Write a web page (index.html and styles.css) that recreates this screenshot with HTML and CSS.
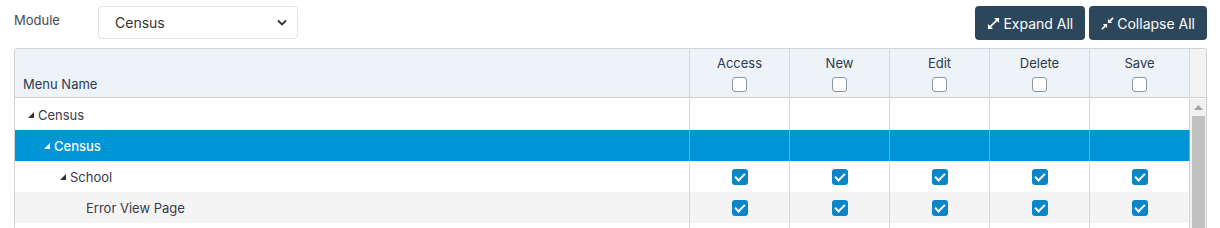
FILE: index.html
```html
<!DOCTYPE html>
<html lang="en">
<head>
    <meta charset="UTF-8">
    <meta name="viewport" content="width=device-width, initial-scale=1.0">
    <title>Menu Rights</title>
    <link rel="stylesheet" href="styles.css">
</head>
<body>
    <div class="page">
        <div class="toolbar">
            <label class="field-label">Module</label>
            <div class="select">
                <span>Census</span>
                <svg class="chevron" width="10" height="7" viewBox="0 0 10 7"><path d="M1 1.5 L5 5.5 L9 1.5" fill="none" stroke="#333" stroke-width="1.8"/></svg>
            </div>
            <div class="actions">
                <button class="btn">
                    <svg width="13" height="13" viewBox="0 0 14 14"><path d="M3 11 L11 3" stroke="#fff" stroke-width="1.8"/><polygon points="13,1 13,6.5 7.5,1" fill="#fff"/><polygon points="1,13 1,7.5 6.5,13" fill="#fff"/></svg>
                    Expand All
                </button>
                <button class="btn">
                    <svg width="13" height="13" viewBox="0 0 14 14"><path d="M9.5 4.5 L13 1 M4.5 9.5 L1 13" stroke="#fff" stroke-width="1.8"/><polygon points="7.5,6.5 7.5,2 12,6.5" fill="#fff"/><polygon points="6.5,7.5 6.5,12 2,7.5" fill="#fff"/></svg>
                    Collapse All
                </button>
            </div>
        </div>

        <div class="grid">
            <div class="grid-head">
                <div class="head-cell menu-col">Menu Name</div>
                <div class="head-cell perm-col"><span>Access</span><i class="box"></i></div>
                <div class="head-cell perm-col"><span>New</span><i class="box"></i></div>
                <div class="head-cell perm-col"><span>Edit</span><i class="box"></i></div>
                <div class="head-cell perm-col"><span>Delete</span><i class="box"></i></div>
                <div class="head-cell perm-col"><span>Save</span><i class="box"></i></div>
                <div class="head-cell scroll-col"></div>
            </div>
            <div class="grid-body">
                <div class="rows">
                    <div class="row">
                        <div class="cell name lvl-1"><span class="toggle"><svg width="6" height="6" viewBox="0 0 6 6"><polygon points="0,6 6,6 6,0"/></svg></span>Census</div>
                        <div class="cell"></div><div class="cell"></div><div class="cell"></div><div class="cell"></div><div class="cell"></div>
                    </div>
                    <div class="row selected">
                        <div class="cell name lvl-2"><span class="toggle"><svg width="6" height="6" viewBox="0 0 6 6"><polygon points="0,6 6,6 6,0"/></svg></span>Census</div>
                        <div class="cell"></div><div class="cell"></div><div class="cell"></div><div class="cell"></div><div class="cell"></div>
                    </div>
                    <div class="row">
                        <div class="cell name lvl-3"><span class="toggle"><svg width="6" height="6" viewBox="0 0 6 6"><polygon points="0,6 6,6 6,0"/></svg></span>School</div>
                        <div class="cell"><i class="check"></i></div>
                        <div class="cell"><i class="check"></i></div>
                        <div class="cell"><i class="check"></i></div>
                        <div class="cell"><i class="check"></i></div>
                        <div class="cell"><i class="check"></i></div>
                    </div>
                    <div class="row alt">
                        <div class="cell name lvl-4"><span class="toggle"></span>Error View Page</div>
                        <div class="cell"><i class="check"></i></div>
                        <div class="cell"><i class="check"></i></div>
                        <div class="cell"><i class="check"></i></div>
                        <div class="cell"><i class="check"></i></div>
                        <div class="cell"><i class="check"></i></div>
                    </div>
                    <div class="row">
                        <div class="cell name"></div>
                        <div class="cell"></div><div class="cell"></div><div class="cell"></div><div class="cell"></div><div class="cell"></div>
                    </div>
                </div>
                <div class="scrollbar">
                    <svg class="arrow-up" width="9" height="5" viewBox="0 0 9 5"><polygon points="0,5 9,5 4.5,0" fill="#a3a3a3"/></svg>
                    <div class="thumb"></div>
                </div>
            </div>
        </div>
    </div>
</body>
</html>
```

FILE: styles.css
```css
*{
    box-sizing: border-box;
}
html,
body{
    margin: 0px;
    padding: 0px;
    background: #ffffff;
    overflow: hidden;
}
body{
    font-family: Inter, "Noto Sans", sans-serif;
    font-size: 13px;
    color: #3b3a4b;
}
.page{
    padding: 6px 13px 0px 14px;
}

/* 顶部工具栏 */
.toolbar{
    display: flex;
    align-items: flex-start;
    height: 34px;
}
.field-label{
    width: 84px;
    padding-top: 6px;
    font-size: 13px;
    color: #444a55;
}
.select{
    width: 200px;
    height: 33px;
    border: 1px solid #e1e4e8;
    border-radius: 4px;
    display: flex;
    align-items: center;
    justify-content: space-between;
    padding: 0px 10px 0px 16px;
    font-size: 14px;
    color: #333;
}
.actions{
    margin-left: auto;
    display: flex;
    gap: 4px;
}
.btn{
    height: 34px;
    border: none;
    border-radius: 4px;
    background: #2c475b;
    color: #ffffff;
    font-family: Inter, "Noto Sans", sans-serif;
    font-size: 14px;
    display: flex;
    align-items: center;
    gap: 3px;
    padding: 0px 12px 0px 12px;
}

/* 表格 */
.grid{
    margin-top: 8px;
    border: 1px solid #cfd3d6;
    border-bottom: none;
    border-radius: 4px 4px 0px 0px;
    overflow: hidden;
}
.grid-head{
    display: grid;
    grid-template-columns: 675px repeat(5, 100px) 17px;
    height: 49px;
    border-bottom: 1px solid #cfd3d6;
    background: #eef3f8;
    color: #2b3a52;
}
.head-cell{
    border-right: 1px solid #d3d6d9;
}
.menu-col{
    display: flex;
    align-items: flex-end;
    padding: 0px 8px 5px 8px;
}
.perm-col{
    display: flex;
    flex-direction: column;
    align-items: center;
    padding-top: 6px;
}
.perm-col span{
    line-height: 16px;
    margin-bottom: 6px;
}
.box{
    display: block;
    width: 15px;
    height: 15px;
    background: #ffffff;
    border: 1px solid #8f979e;
    border-radius: 3px;
}
.scroll-col{
    border-right: none;
    background: #f3f3f3;
}
.grid-body{
    display: flex;
    padding-top: 1px;
}
.rows{
    width: 1175px;
}
.row{
    display: grid;
    grid-template-columns: 675px repeat(5, 100px);
    height: 31px;
}
.row.alt{
    background: #f4f4f4;
}
.row.selected{
    background: #0096d6;
    color: #ffffff;
    font-weight: 500;
}
.cell{
    border-right: 1px solid #d3d6d9;
    display: flex;
    align-items: center;
    justify-content: center;
}
.row.selected .cell{
    border-right-color: #4db5e3;
}
.cell.name{
    justify-content: flex-start;
}
.lvl-1{ padding-left: 13px; }
.lvl-2{ padding-left: 29px; }
.lvl-3{ padding-left: 45px; }
.lvl-4{ padding-left: 61px; }
.toggle{
    width: 10px;
    display: inline-flex;
    align-items: center;
}
.toggle svg{
    fill: #333;
}
.row.selected .toggle svg{
    fill: #ffffff;
}
.check{
    display: block;
    width: 16px;
    height: 16px;
    border-radius: 3px;
    background: #0a85c7;
    position: relative;
}
.check::after{
    content: "";
    position: absolute;
    left: 5px;
    top: 2px;
    width: 4px;
    height: 8px;
    border: solid #ffffff;
    border-width: 0px 2px 2px 0px;
    transform: rotate(45deg);
}
.scrollbar{
    width: 17px;
    background: #f1f1f1;
    display: flex;
    flex-direction: column;
    align-items: center;
}
.arrow-up{
    margin-top: 6px;
}
.thumb{
    margin-top: 6px;
    width: 13px;
    height: 140px;
    background: #c1c1c1;
}
```
